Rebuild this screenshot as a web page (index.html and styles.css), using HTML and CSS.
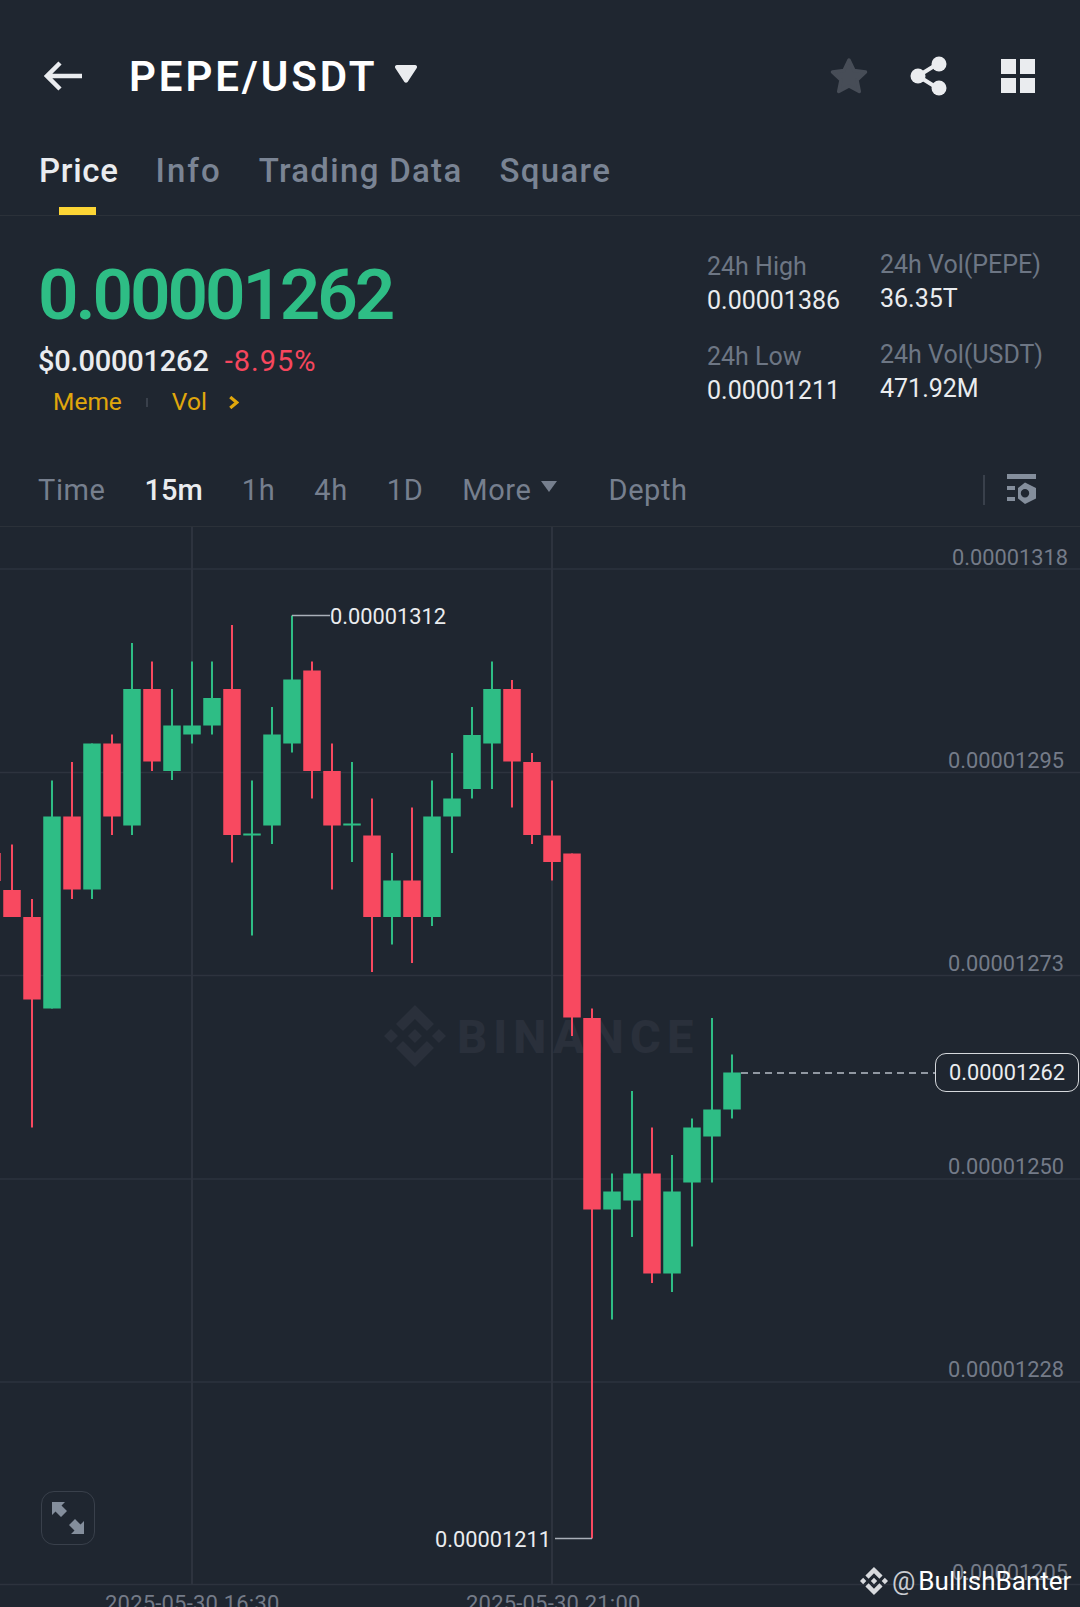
FILE: index.html
```html
<!DOCTYPE html>
<html lang="en">
<head>
    <meta charset="UTF-8">
    <meta name="viewport" content="width=device-width, initial-scale=1.0">
    <title>PEPE/USDT</title>
    <link rel="stylesheet" href="styles.css">
</head>
<body>
    <svg class="defs">
        <symbol id="bnb-logo" viewBox="0 0 24 24">
            <path d="M16.624 13.9202l2.7175 2.7154-7.353 7.353-7.353-7.352 2.7175-2.7164 4.6355 4.6595 4.6356-4.6595zm4.6366-4.6366L24 12l-2.7154 2.7164L18.5682 12l2.6924-2.7164zm-9.272.001l2.7163 2.6914-2.7164 2.7174v-.001L9.2721 12l2.7164-2.7154zm-9.2722-.001L5.4088 12l-2.6914 2.6924L0 12l2.7164-2.7164zM11.9885.0115l7.353 7.329-2.7174 2.7154-4.6356-4.6356-4.6355 4.6595-2.7174-2.7154 7.353-7.353z"/>
        </symbol>
    </svg>

    <header class="topbar">
        <svg class="back-icon" viewBox="0 0 38 30">
            <path d="M38 15H4M16 2L3 15l13 13"/>
        </svg>
        <div class="pair">PEPE/USDT</div>
        <svg class="pair-caret" viewBox="0 0 22 18">
            <path d="M2 0h18a2 2 0 0 1 1.6 3.2L12.6 17a2 2 0 0 1-3.2 0L.4 3.2A2 2 0 0 1 2 0z"/>
        </svg>
        <div class="top-actions">
            <svg class="star-icon" viewBox="0 0 38 40">
                <path d="M19 4l5 10.500 11.500 1.500-8.500 8 2.300 11.500L19 30l-10.300 5.500L11 24l-8.500-8 11.500-1.500z"/>
            </svg>
            <svg class="share-icon" viewBox="0 0 38 40">
                <path class="share-lines" d="M29 7L8 20l21 13"/>
                <circle cx="29" cy="8" r="7.500"/>
                <circle cx="8" cy="20" r="7.500"/>
                <circle cx="29" cy="32" r="7.500"/>
            </svg>
            <div class="grid-icon"><span></span><span></span><span></span><span></span></div>
        </div>
    </header>

    <nav class="tabs">
        <div class="tab active">Price</div>
        <div class="tab">Info</div>
        <div class="tab">Trading Data</div>
        <div class="tab">Square</div>
    </nav>

    <section class="summary">
        <div class="quote">
            <div class="last-price">0.00001262</div>
            <div class="fiat-row">
                <span class="fiat">$0.00001262</span>
                <span class="change">-8.95%</span>
            </div>
            <div class="tag-row">
                <span>Meme</span>
                <i class="tag-sep"></i>
                <span>Vol</span>
                <svg class="tag-arrow" viewBox="0 0 10 12"><path d="M2 1L8 6l-6 5"/></svg>
            </div>
        </div>
        <div class="stat-col stat-col-left">
            <p class="stat-label">24h High</p>
            <p class="stat-value">0.00001386</p>
            <p class="stat-label">24h Low</p>
            <p class="stat-value">0.00001211</p>
        </div>
        <div class="stat-col">
            <p class="stat-label">24h Vol(PEPE)</p>
            <p class="stat-value">36.35T</p>
            <p class="stat-label">24h Vol(USDT)</p>
            <p class="stat-value">471.92M</p>
        </div>
    </section>

    <div class="intervals">
        <span>Time</span>
        <span class="current">15m</span>
        <span>1h</span>
        <span>4h</span>
        <span>1D</span>
        <span class="more">More<i class="more-caret"></i></span>
        <span class="depth">Depth</span>
        <i class="interval-sep"></i>
        <svg class="settings-icon" viewBox="0 0 30 30">
            <path d="M0 0h29v5H0zM0 12h8v4H0zM0 23h8v4H0z"/>
            <path fill-rule="evenodd" d="M18 8.500l11 5.500v10.500L18 30l-7-5.500V14zM18 15a4.200 4.200 0 1 0 0 8.400 4.200 4.200 0 0 0 0-8.400z"/>
        </svg>
    </div>

    <main class="chart">
        <div class="watermark">
            <svg class="watermark-logo"><use href="#bnb-logo"/></svg>
            <span>BINANCE</span>
        </div>
        <svg class="plot" id="plot" viewBox="0 527 1080 1080"></svg>

        <div class="axis">
            <span>0.00001318</span>
            <span>0.00001295</span>
            <span>0.00001273</span>
            <span>0.00001250</span>
            <span>0.00001228</span>
            <span>0.00001205</span>
        </div>

        <div class="mark mark-high">0.00001312</div>
        <div class="mark mark-low">0.00001211</div>
        <div class="price-tag">0.00001262</div>

        <div class="expand">
            <svg viewBox="0 0 32 32">
                <path d="M0 0h13L9.500 3.500 15 9l-6 6-5.500-5.500L0 13zM32 32H19l3.500-3.500L17 23l6-6 5.500 5.500L32 19z"/>
            </svg>
        </div>

        <div class="date date-a">2025-05-30 16:30</div>
        <div class="date date-b">2025-05-30 21:00</div>

        <div class="credit">
            <svg class="credit-logo"><use href="#bnb-logo"/></svg>
            <span class="credit-at">@</span>
            <span>BullishBanter</span>
        </div>
    </main>

    <script src="chart.js"></script>
</body>
</html>
```

FILE: styles.css
```css
* {
    margin: 0;
    padding: 0;
    box-sizing: border-box;
    font-family: 'Roboto', 'Noto Sans', sans-serif;
}

body {
    background-color: #1f2630;
    width: 1080px;
    height: 1607px;
    overflow: hidden;
    color: #eaecef;
}

.defs {
    display: none;
}

/* top bar */
.topbar {
    display: flex;
    align-items: center;
    height: 152px;
    padding-left: 44px;
}

.back-icon {
    width: 38px;
    height: 30px;
    fill: none;
    stroke: #eaecef;
    stroke-width: 4.500;
}

.pair {
    margin-left: 47px;
    font-size: 42px;
    font-weight: 600;
    letter-spacing: 2.900px;
    color: #fff;
}

.pair-caret {
    width: 22px;
    height: 18px;
    margin: -4px 0 0 17px;
    fill: #eaecef;
}

.top-actions {
    display: flex;
    align-items: center;
    margin-left: auto;
    padding-right: 45px;
}

.star-icon {
    width: 38px;
    height: 40px;
    fill: #474d57;
    stroke: #474d57;
    stroke-width: 3.500;
    stroke-linejoin: round;
}

.share-icon {
    width: 38px;
    height: 40px;
    margin-left: 42px;
    fill: #eaecef;
}

.share-lines {
    fill: none;
    stroke: #eaecef;
    stroke-width: 4;
}

.grid-icon {
    display: grid;
    grid-template-columns: 15px 15px;
    gap: 4px;
    margin-left: 53px;
}

.grid-icon span {
    height: 15px;
    background-color: #eaecef;
}

/* tabs */
.tabs {
    display: flex;
    gap: 37px;
    height: 64px;
    padding-left: 39px;
    border-bottom: 1px solid #2b3139;
}

.tab {
    position: relative;
    font-size: 33px;
    line-height: 38px;
    font-weight: 500;
    letter-spacing: 1.300px;
    color: #7a8494;
}

.tab:nth-child(2) {
    letter-spacing: 2px;
}

.tab.active {
    letter-spacing: 0.700px;
    color: #eaecef;
}

.tab.active::after {
    content: "";
    position: absolute;
    left: 20px;
    top: 55px;
    width: 37px;
    height: 8px;
    background-color: #fcd535;
}

/* price summary */
.summary {
    display: flex;
    height: 239px;
    padding: 31px 0 0 38px;
}

.quote {
    flex: 1;
    padding-top: 13px;
}

.last-price {
    font-size: 71px;
    line-height: 70px;
    font-weight: 600;
    letter-spacing: -3.100px;
    color: #2ebd85;
}

.fiat-row {
    display: flex;
    gap: 16px;
    margin-top: 13px;
    font-size: 29px;
    line-height: 36px;
}

.fiat {
    font-weight: 500;
    letter-spacing: -0.200px;
}

.change {
    letter-spacing: 1px;
    color: #f6465d;
}

.tag-row {
    display: flex;
    align-items: center;
    margin-top: 8px;
    padding-left: 15px;
    font-size: 24.500px;
    line-height: 30px;
    color: #e0a70c;
}

.tag-sep {
    width: 2px;
    height: 9px;
    margin: 0 24px;
    background-color: #39404b;
}

.tag-arrow {
    width: 11px;
    height: 13px;
    margin-left: 21px;
    fill: none;
    stroke: #e0a70c;
    stroke-width: 3;
}

.stat-col {
    width: 200px;
}

.stat-col-left {
    width: 173px;
    padding-top: 2px;
}

.stat-label {
    font-size: 25px;
    line-height: 35px;
    color: #6d7684;
}

.stat-value {
    margin: -1px 0 21px;
    font-size: 25px;
    line-height: 35px;
    color: #eaecef;
}

/* interval row */
.intervals {
    display: flex;
    align-items: center;
    gap: 39px;
    height: 72px;
    padding: 0 43px 2px 38px;
    font-size: 29px;
    letter-spacing: 0.600px;
    color: #767f8e;
    border-bottom: 1px solid #2b3139;
}

.intervals .current {
    font-weight: 500;
    letter-spacing: 0;
    color: #eaecef;
}

.more {
    display: flex;
    align-items: center;
    gap: 9px;
}

.more-caret {
    width: 0;
    height: 0;
    margin-top: -6px;
    border-left: 8px solid transparent;
    border-right: 8px solid transparent;
    border-top: 11px solid #767f8e;
}

.depth {
    margin-left: 13px;
}

.interval-sep {
    width: 2px;
    height: 30px;
    margin-left: auto;
    background-color: #39404b;
}

.settings-icon {
    width: 30px;
    height: 30px;
    margin: -2px 0 0 -17px;
    fill: #848e9c;
}

/* chart */
.chart {
    position: relative;
    height: 1080px;
    overflow: hidden;
}

.plot {
    position: absolute;
    left: 0;
    top: 0;
    width: 1080px;
    height: 1080px;
}

.grid-line {
    stroke: #2d333e;
    stroke-width: 1.500;
}

.grid-col {
    stroke-width: 2;
}

.up {
    fill: #2ebd85;
}

.down {
    fill: #f84960;
}

.leader {
    fill: none;
    stroke: #a9afb8;
    stroke-width: 1.500;
}

.last-line {
    stroke: #b7bdc6;
    stroke-width: 1.500;
    stroke-dasharray: 7 5;
}

.watermark {
    position: absolute;
    left: 384px;
    top: 478px;
    display: flex;
    align-items: center;
    gap: 11px;
    font-family: 'Inter', sans-serif;
    font-size: 47px;
    font-weight: 800;
    letter-spacing: 6.100px;
    color: #2a303b;
}

.watermark-logo {
    width: 62px;
    height: 62px;
    fill: #2a303b;
}

.axis {
    position: absolute;
    right: 16px;
    top: 16px;
    display: flex;
    flex-direction: column;
    align-items: flex-end;
    font-size: 21.800px;
    color: #747b88;
}

.axis span {
    height: 203px;
    line-height: 30px;
}

.axis span:first-child,
.axis span:last-child {
    margin-right: -4px;
}

.mark {
    position: absolute;
    font-size: 21.800px;
    line-height: 30px;
    color: #eaecef;
}

.mark-high {
    left: 330px;
    top: 75px;
}

.mark-low {
    left: 435px;
    top: 998px;
}

.price-tag {
    position: absolute;
    left: 935px;
    top: 526px;
    width: 144px;
    height: 39px;
    border: 1.500px solid #d5d8dc;
    border-radius: 11px;
    background-color: #1f2630;
    text-align: center;
    font-size: 21.800px;
    line-height: 37px;
    color: #eaecef;
}

.expand {
    position: absolute;
    left: 41px;
    top: 964px;
    display: flex;
    align-items: center;
    justify-content: center;
    width: 54px;
    height: 54px;
    border: 1.500px solid #39404b;
    border-radius: 13px;
}

.expand svg {
    width: 32px;
    height: 32px;
    fill: #848e9c;
}

.date {
    position: absolute;
    top: 1062px;
    font-size: 22px;
    line-height: 30px;
    letter-spacing: 0.200px;
    color: #747b88;
}

.date-a {
    left: 105px;
}

.date-b {
    left: 466px;
}

.credit {
    position: absolute;
    left: 860px;
    top: 1039px;
    display: flex;
    align-items: center;
    font-size: 26px;
    line-height: 30px;
    color: #fff;
}

.credit-logo {
    width: 28px;
    height: 28px;
    fill: #d8dade;
}

.credit-at {
    margin: 0 3px 0 4px;
    color: #c9ccd1;
}
```

FILE: chart.js
```js
// [center x, wick top, body top, body bottom, wick bottom, direction]
const candles = [
    [-8, 853, 853, 881, 881, 'down'],
    [12, 844.5, 890, 917, 917, 'down'],
    [32, 899, 917, 999.5, 1127.5, 'down'],
    [52, 780.5, 816.5, 1008.5, 1008.5, 'up'],
    [72, 762, 816.5, 889.5, 899, 'down'],
    [92, 743.5, 743.5, 889.5, 899, 'up'],
    [112, 734.5, 743.5, 816.5, 835, 'down'],
    [132, 643, 689, 825.5, 835, 'up'],
    [152, 661.5, 689, 761.5, 771, 'down'],
    [172, 689, 725.5, 771, 780, 'up'],
    [192, 661.5, 725.5, 734.5, 743.5, 'up'],
    [212, 661.5, 698, 725.5, 734.5, 'up'],
    [232, 625, 689, 835, 862.5, 'down'],
    [252, 780.5, 833.5, 835.5, 935.5, 'up'],
    [272, 707, 734.5, 825.5, 844, 'up'],
    [292, 615.5, 679.5, 743.5, 752.5, 'up'],
    [312, 661.5, 670.5, 771, 798.5, 'down'],
    [332, 743.5, 771, 825.5, 889.5, 'down'],
    [352, 762, 823.5, 825.5, 862, 'up'],
    [372, 798.5, 835.5, 917, 972, 'down'],
    [392, 853, 880.5, 917, 944.5, 'up'],
    [412, 807.5, 880.5, 917, 963, 'down'],
    [432, 780.5, 816.5, 917, 926, 'up'],
    [452, 753, 798.5, 816.5, 853, 'up'],
    [472, 707, 735, 789, 798.5, 'up'],
    [492, 661.5, 689, 743.5, 789, 'up'],
    [512, 680, 689, 761.5, 807.5, 'down'],
    [532, 753, 762, 835, 844, 'down'],
    [552, 780.5, 835.5, 862, 880.5, 'down'],
    [572, 853.5, 853.5, 1017.5, 1036, 'down'],
    [592, 1008.5, 1018, 1209.5, 1538.5, 'down'],
    [612, 1173.5, 1191.5, 1209.5, 1319.5, 'up'],
    [632, 1091, 1173.5, 1200.5, 1237, 'up'],
    [652, 1127.5, 1173.5, 1273.5, 1283, 'down'],
    [672, 1155, 1191.5, 1273.5, 1292, 'up'],
    [692, 1118.5, 1127.5, 1182.5, 1246.5, 'up'],
    [712, 1018, 1109.5, 1136.5, 1182.5, 'up'],
    [732, 1054.5, 1072.5, 1109.5, 1118.5, 'up']
];

const gridRows = [569, 772.5, 975.5, 1179, 1382, 1584.5];
const gridCols = [192, 552];

let html = '';

gridRows.forEach(y => {
    html += `<line class="grid-line" x1="0" x2="1080" y1="${y}" y2="${y}"/>`;
});
gridCols.forEach(x => {
    html += `<line class="grid-line grid-col" x1="${x}" x2="${x}" y1="527" y2="1585"/>`;
});

candles.forEach(([x, wickTop, top, bottom, wickBottom, dir]) => {
    html += `<rect class="${dir}" x="${x - 1}" y="${wickTop}" width="2" height="${wickBottom - wickTop}"/>`;
    html += `<rect class="${dir}" x="${x - 8.75}" y="${top}" width="17.5" height="${bottom - top}"/>`;
});

// high and low leaders, then the dashed line to the price tag
html += '<path class="leader" d="M292 615.5H330"/>';
html += '<path class="leader" d="M555 1538.500H592"/>';
html += '<line class="last-line" x1="741" x2="935" y1="1073" y2="1073"/>';

document.getElementById('plot').innerHTML = html;
```
